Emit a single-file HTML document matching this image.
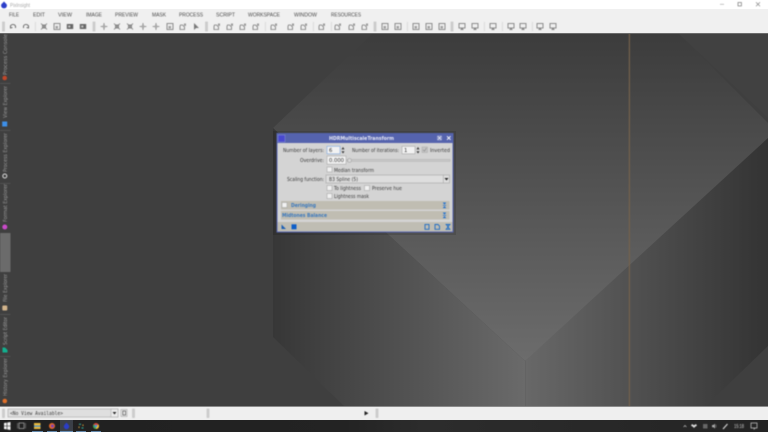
<!DOCTYPE html>
<html lang="en"><head><meta charset="utf-8"><title>PixInsight</title>
<style>
html,body{margin:0;padding:0;width:768px;height:432px;overflow:hidden;background:#3f3f3f}
svg{display:block;position:absolute;left:0;top:0}
text{font-family:"DejaVu Sans","Liberation Sans",sans-serif;font-size:5.3px;fill:#3a3a3a}
.m{font-size:5.4px;fill:#4a4a4a;font-family:"Liberation Sans",sans-serif}
.t{font-size:5.4px;fill:#9a9a9a}
.b{font-weight:bold;fill:#3a78bd;font-size:5.3px}
.i{fill:none;stroke:#7c7c7c;stroke-width:.85}
.h{fill:#cfcfcf;stroke:#bbb;stroke-width:.5}
.c{fill:#f2f2f2;stroke:#a8a8a8;stroke-width:.6}
.soft{filter:blur(.45px)}
</style></head><body>
<svg width="768" height="432" viewBox="0 0 768 432" xmlns="http://www.w3.org/2000/svg">
<defs>
<linearGradient id="gc" gradientUnits="userSpaceOnUse" x1="0" y1="33" x2="0" y2="361"><stop offset="0" stop-color="#3c3c3c"/><stop offset="1" stop-color="#6c6c6c"/></linearGradient>
<linearGradient id="gl" gradientUnits="userSpaceOnUse" x1="273" y1="0" x2="525" y2="0"><stop offset="0" stop-color="#373737"/><stop offset="1" stop-color="#6a6a6a"/></linearGradient>
<linearGradient id="gr" gradientUnits="userSpaceOnUse" x1="525" y1="0" x2="768" y2="0"><stop offset="0" stop-color="#686868"/><stop offset="1" stop-color="#333"/></linearGradient>
<linearGradient id="gt" x1="0" y1="0" x2="1" y2="0"><stop offset="0" stop-color="#202020"/><stop offset=".45" stop-color="#232323"/><stop offset=".55" stop-color="#2c2c2c"/><stop offset="1" stop-color="#242424"/></linearGradient>
<symbol id="pg" viewBox="0 0 8 8"><rect class="i" x="1" y="1" width="6" height="6"/><rect x="2.5" y="3.5" width="2.5" height="2.5" fill="#a0a0a0"/></symbol>
<symbol id="pf" viewBox="0 0 8 8"><rect x=".8" y="1.5" width="6.4" height="5" fill="#666"/><rect x="2.3" y="3" width="2" height="2" fill="#ccc"/></symbol>
<symbol id="px" viewBox="0 0 8 8"><path class="i" d="M4 .6V7.4M.6 4H7.4"/><rect x="2.7" y="2.7" width="2.6" height="2.6" fill="#aaa"/></symbol>
<symbol id="pz" viewBox="0 0 8 8"><path class="i" d="M1 1L7 7M7 1L1 7"/><rect class="i" x="2.5" y="2.5" width="3" height="3"/></symbol>
<symbol id="ps" viewBox="0 0 8 8"><path class="i" d="M1 4V7H5.5V4.5L3.5 2.5H1.5Z"/><rect x="5" y="1" width="2" height="2.4" fill="#999"/></symbol>
<symbol id="pm" viewBox="0 0 8 8"><rect class="i" x="1" y="1" width="6" height="4.5"/><path d="M2.5 7H5.5" stroke="#7c7c7c" stroke-width=".9"/><rect x="3" y="5" width="2" height="1.6" fill="#888"/></symbol>
<symbol id="spin" viewBox="0 0 4 8"><path d="M2 .5L3.6 3H.4ZM2 7.5L.4 5H3.6Z" fill="#333"/></symbol>
<symbol id="coll" viewBox="0 0 6 8"><path d="M.8 .6H5.2L3 3.2ZM.8 7.4H5.2L3 4.8Z" fill="#1e6fd0"/><rect x="1" y="3.6" width="4" height=".8" fill="#1e6fd0"/></symbol>
</defs>

<!-- workspace background -->
<rect x="0" y="33" width="768" height="374" fill="#3f3f3f"/>
<polygon points="678,33 768,33 768,118" fill="#414141"/>
<polygon points="373,33 678,33 790,145 525,361 273,128" fill="url(#gc)"/>
<polygon points="273,128 525,361 525,407 345,407 273,337" fill="url(#gl)"/>
<polygon points="525,361 768,138 768,346 705,407 525,407" fill="url(#gr)"/>
<path d="M525.5 361V407" stroke="#5f5f5f" stroke-width=".5"/>
<rect x="628.8" y="33" width="1.2" height="374" fill="#75624c" class="soft"/>
<rect x="0" y="33" width="768" height="1" fill="#6a6a6a"/>

<!-- title bar -->
<rect width="768" height="9" fill="#fff"/>
<rect y="9" width="768" height="24" fill="#f0f0f0"/>
<g class="soft">
<path d="M4 1.5L6.6 4.2A2.9 2.9 0 1 1 1.4 4.2Z" fill="#2b3ec9"/>
<text x="10" y="6.8" style="font-size:5px;fill:#a8a8a8;font-family:'Liberation Sans',sans-serif" textLength="20" lengthAdjust="spacingAndGlyphs">PixInsight</text>
<path d="M720 4.3H724" stroke="#aaa" stroke-width=".7"/>
<rect x="738" y="2.5" width="3.4" height="3.4" fill="none" stroke="#777" stroke-width=".7"/>
<path d="M756 2.2L760 6.2M760 2.2L756 6.2" stroke="#888" stroke-width=".7"/>

<!-- menu -->
<text class="m" x="9" y="16.6" textLength="10" lengthAdjust="spacingAndGlyphs">FILE</text>
<text class="m" x="33" y="16.6" textLength="12" lengthAdjust="spacingAndGlyphs">EDIT</text>
<text class="m" x="58" y="16.6" textLength="14" lengthAdjust="spacingAndGlyphs">VIEW</text>
<text class="m" x="86" y="16.6" textLength="16" lengthAdjust="spacingAndGlyphs">IMAGE</text>
<text class="m" x="115" y="16.6" textLength="23" lengthAdjust="spacingAndGlyphs">PREVIEW</text>
<text class="m" x="152" y="16.6" textLength="14" lengthAdjust="spacingAndGlyphs">MASK</text>
<text class="m" x="179" y="16.6" textLength="24" lengthAdjust="spacingAndGlyphs">PROCESS</text>
<text class="m" x="216" y="16.6" textLength="19" lengthAdjust="spacingAndGlyphs">SCRIPT</text>
<text class="m" x="248" y="16.6" textLength="32" lengthAdjust="spacingAndGlyphs">WORKSPACE</text>
<text class="m" x="294" y="16.6" textLength="23" lengthAdjust="spacingAndGlyphs">WINDOW</text>
<text class="m" x="331" y="16.6" textLength="30" lengthAdjust="spacingAndGlyphs">RESOURCES</text>

<!-- toolbar handles / separators -->
<g class="h">
<rect x="2.5" y="22" width="2" height="9"/><rect x="93" y="22" width="2" height="9"/><rect x="205.5" y="22" width="2" height="9"/><rect x="374" y="22" width="2" height="9"/><rect x="451" y="22" width="2" height="9"/>
</g>
<g fill="#d4d4d4">
<rect x="35" y="22" width=".8" height="9"/><rect x="265" y="22" width=".8" height="9"/><rect x="313" y="22" width=".8" height="9"/><rect x="331" y="22" width=".8" height="9"/><rect x="407" y="22" width=".8" height="9"/><rect x="484" y="22" width=".8" height="9"/><rect x="502" y="22" width=".8" height="9"/><rect x="532" y="22" width=".8" height="9"/>
</g>
<!-- toolbar icons -->
<path class="i" d="M10.5 28V26.5A2.5 2 0 0 1 15.5 26.5V28M10.5 25.5L10.5 28L12.5 27.5" style="stroke:#555"/>
<path class="i" d="M28.5 28V26.5A2.5 2 0 0 0 23.5 26.5V28M28.5 25.5L28.5 28L26.5 27.5" style="stroke:#555"/>
<use href="#pz" x="40" y="22.5" width="8" height="8"/>
<use href="#pg" x="53" y="22.5" width="8" height="8"/>
<use href="#pf" x="66" y="22.5" width="8" height="8"/>
<use href="#pf" x="79" y="22.5" width="8" height="8"/>
<use href="#px" x="100" y="22.5" width="8" height="8"/>
<use href="#pz" x="113" y="22.5" width="8" height="8"/>
<use href="#pz" x="126" y="22.5" width="8" height="8"/>
<use href="#px" x="139" y="22.5" width="8" height="8"/>
<use href="#px" x="152" y="22.5" width="8" height="8"/>
<use href="#pg" x="166" y="22.5" width="8" height="8"/>
<use href="#ps" x="179" y="22.5" width="8" height="8"/>
<path d="M194 23L194 30L196 28L199 28Z" fill="#777"/>
<use href="#ps" x="213" y="22.5" width="8" height="8"/>
<use href="#ps" x="226" y="22.5" width="8" height="8"/>
<use href="#ps" x="239" y="22.5" width="8" height="8"/>
<use href="#ps" x="252" y="22.5" width="8" height="8"/>
<use href="#ps" x="270" y="22.5" width="8" height="8"/>
<use href="#ps" x="287" y="22.5" width="8" height="8"/>
<use href="#ps" x="300" y="22.5" width="8" height="8"/>
<use href="#ps" x="318" y="22.5" width="8" height="8"/>
<use href="#ps" x="334" y="22.5" width="8" height="8"/>
<use href="#ps" x="348" y="22.5" width="8" height="8"/>
<use href="#ps" x="361" y="22.5" width="8" height="8"/>
<use href="#pg" x="381" y="22.5" width="8" height="8"/>
<use href="#pg" x="394" y="22.5" width="8" height="8"/>
<use href="#pg" x="412" y="22.5" width="8" height="8"/>
<use href="#pg" x="425" y="22.5" width="8" height="8"/>
<use href="#pg" x="438" y="22.5" width="8" height="8"/>
<use href="#pm" x="458" y="22.5" width="8" height="8"/>
<use href="#pm" x="471" y="22.5" width="8" height="8"/>
<use href="#pm" x="489" y="22.5" width="8" height="8"/>
<use href="#pm" x="507" y="22.5" width="8" height="8"/>
<use href="#pm" x="519" y="22.5" width="8" height="8"/>
<use href="#pm" x="536" y="22.5" width="8" height="8"/>
<use href="#pm" x="549" y="22.5" width="8" height="8"/>

<!-- side tabs -->
<rect x="0" y="233" width="10.5" height="39" fill="#6b6b6b"/>
<g fill="#565656">
<rect x="0" y="83" width="10.5" height=".8"/><rect x="0" y="130" width="10.5" height=".8"/><rect x="0" y="183" width="10.5" height=".8"/><rect x="0" y="314" width="10.5" height=".8"/><rect x="0" y="356" width="10.5" height=".8"/>
</g>
<text class="t" transform="rotate(-90 6.8 75)" x="6.8" y="75" textLength="41" lengthAdjust="spacingAndGlyphs">Process Console</text>
<text class="t" transform="rotate(-90 6.8 118)" x="6.8" y="118" textLength="32" lengthAdjust="spacingAndGlyphs">View Explorer</text>
<text class="t" transform="rotate(-90 6.8 172)" x="6.8" y="172" textLength="39" lengthAdjust="spacingAndGlyphs">Process Explorer</text>
<text class="t" transform="rotate(-90 6.8 222)" x="6.8" y="222" textLength="38" lengthAdjust="spacingAndGlyphs">Format Explorer</text>
<text class="t" transform="rotate(-90 6.8 302)" x="6.8" y="302" textLength="28" lengthAdjust="spacingAndGlyphs">File Explorer</text>
<text class="t" transform="rotate(-90 6.8 345)" x="6.8" y="345" textLength="28" lengthAdjust="spacingAndGlyphs">Script Editor</text>
<text class="t" transform="rotate(-90 6.8 396)" x="6.8" y="396" textLength="38" lengthAdjust="spacingAndGlyphs">History Explorer</text>
<circle cx="4.7" cy="78" r="2.3" fill="#c0472a"/>
<rect x="2.2" y="121.5" width="5" height="5" fill="#3d8fe8"/>
<circle cx="4.8" cy="176" r="2" fill="none" stroke="#ddd" stroke-width="1"/>
<circle cx="4.8" cy="227" r="2.5" fill="#c94ac9"/>
<rect x="2.3" y="305.5" width="5" height="5" rx="1" fill="#d2b48c"/>
<path d="M2.5 347.5H5L7.5 350V352.5H2.5Z" fill="#12b08f"/>
<circle cx="4.8" cy="401" r="2.3" fill="#e0702a"/>
</g>

<!-- dialog -->
<rect x="273" y="131" width="183" height="104" fill="#000" opacity=".12"/>
<g class="soft">
<rect x="276.5" y="133" width="177" height="99.5" fill="#5563ad"/>
<rect x="277.5" y="143" width="175" height="88.5" fill="#d4d4d4"/>
<rect x="277.5" y="222" width="175" height="9.5" fill="#bfbdb3"/>
<rect x="281" y="201" width="168.5" height="8.5" fill="#c0bdb2"/>
<rect x="281" y="211" width="168.5" height="8.5" fill="#c0bdb2"/>
<rect x="278" y="135" width="7" height="7" fill="#4848cf" stroke="#8b93d6" stroke-width=".5"/>
<text x="329" y="140.2" textLength="65" lengthAdjust="spacingAndGlyphs" style="font-weight:bold;fill:#e6e8f5">HDRMultiscaleTransform</text>
<path d="M438 136.5L441 139.5M441 136.5L438 139.5" stroke="#fff" stroke-width=".8"/>
<rect x="437.5" y="136" width="4" height="4" fill="none" stroke="#dfe2f2" stroke-width=".4"/>
<path d="M447 136.2L450.6 139.8M450.6 136.2L447 139.8" stroke="#fff" stroke-width=".9"/>

<text x="283" y="151.8" textLength="41" lengthAdjust="spacingAndGlyphs">Number of layers:</text>
<rect class="c" x="327" y="146.3" width="13" height="7.5" style="stroke:#7ea9e0"/>
<text x="329" y="151.8">6</text>
<use href="#spin" x="341" y="146.5" width="4" height="7.5"/>
<text x="352" y="151.8" textLength="47" lengthAdjust="spacingAndGlyphs">Number of iterations:</text>
<rect class="c" x="402" y="146.3" width="13" height="7.5"/>
<text x="404" y="151.8">1</text>
<use href="#spin" x="416" y="146.5" width="4" height="7.5"/>
<rect x="422" y="147" width="5.5" height="5.5" fill="#c4c4c4" stroke="#aaa" stroke-width=".5"/>
<path d="M423 149.7L424.4 151.2L426.5 148" fill="none" stroke="#888" stroke-width=".6"/>
<text x="430" y="151.8" textLength="20" lengthAdjust="spacingAndGlyphs">Inverted</text>

<text x="300" y="162" textLength="24" lengthAdjust="spacingAndGlyphs">Overdrive:</text>
<rect class="c" x="327" y="156" width="19" height="8.2"/>
<text x="329" y="162" textLength="15" lengthAdjust="spacingAndGlyphs">0.000</text>
<rect x="347" y="159.4" width="103" height="2" fill="#c8c8c8" stroke="#aaa" stroke-width=".4"/>
<circle cx="349.5" cy="160.4" r="2" fill="#d8d8d8" stroke="#999" stroke-width=".5"/>

<rect class="c" x="327" y="167" width="5" height="5"/>
<text x="334" y="171.8" textLength="40" lengthAdjust="spacingAndGlyphs">Median transform</text>

<text x="287" y="180.8" textLength="37" lengthAdjust="spacingAndGlyphs">Scaling function:</text>
<rect x="326" y="175" width="123.5" height="8" fill="#dedede" stroke="#a5a5a5" stroke-width=".6"/>
<text x="329" y="180.8" textLength="29" lengthAdjust="spacingAndGlyphs">B3 Spline (5)</text>
<rect x="443" y="175" width=".6" height="8" fill="#a5a5a5"/>
<path d="M444.5 178H448.5L446.5 180.5Z" fill="#222"/>

<rect class="c" x="327" y="185.5" width="5" height="5"/>
<text x="334" y="190" textLength="27" lengthAdjust="spacingAndGlyphs">To lightness</text>
<rect class="c" x="364.5" y="185.5" width="5" height="5"/>
<text x="372" y="190" textLength="30" lengthAdjust="spacingAndGlyphs">Preserve hue</text>
<rect class="c" x="327" y="193.5" width="5" height="5"/>
<text x="334" y="198" textLength="35" lengthAdjust="spacingAndGlyphs">Lightness mask</text>

<rect class="c" x="282" y="202.5" width="5" height="5"/>
<text class="b" x="291" y="207" textLength="25" lengthAdjust="spacingAndGlyphs">Deringing</text>
<use href="#coll" x="442" y="202" width="5" height="6.6"/>
<text class="b" x="282" y="217" textLength="45" lengthAdjust="spacingAndGlyphs">Midtones Balance</text>
<use href="#coll" x="442" y="212" width="5" height="6.6"/>

<path d="M281.5 224.5V229H286Z" fill="#1d5fb4"/>
<rect x="291.5" y="224.3" width="5" height="5" fill="#0d5ec8"/>
<rect x="425" y="224.5" width="4" height="4.8" fill="none" stroke="#1d6bc4" stroke-width=".9"/>
<path d="M435 224.5H438L439.5 226V229.3H435Z" fill="none" stroke="#1d6bc4" stroke-width=".9"/>
<path d="M445.5 224.5H450.5M445.5 229.3H450.5M446.5 224.5L449.5 229.3M449.5 224.5L446.5 229.3" fill="none" stroke="#1d6bc4" stroke-width=".9"/>
</g>

<!-- bottom bar -->
<rect y="407" width="768" height="13" fill="#efefef"/>
<rect y="406" width="768" height="1" fill="#8a8a8a"/>
<g class="soft">
<g class="h"><rect x="2.5" y="409" width="2" height="8.5"/><rect x="132.5" y="409" width="2" height="8.5"/><rect x="207" y="409" width="2" height="8.5"/><rect x="376" y="409" width="2" height="8.5"/></g>
<rect x="8" y="409" width="110" height="8" fill="#dfdfdf" stroke="#a5a5a5" stroke-width=".6"/>
<text x="10" y="414.8" style="font-family:'DejaVu Sans Mono','Liberation Mono',monospace;font-size:4.8px" textLength="53" lengthAdjust="spacingAndGlyphs">&lt;No View Available&gt;</text>
<rect x="111" y="409" width="7" height="8" fill="#ececec" stroke="#a5a5a5" stroke-width=".5"/>
<path d="M112.6 412H116.4L114.5 414.5Z" fill="#222"/>
<rect x="121" y="409.5" width="6" height="7" fill="#e8e8e8" stroke="#999" stroke-width=".5"/>
<rect x="122.8" y="411" width="2.8" height="4" fill="none" stroke="#444" stroke-width=".6"/>
<path d="M364.5 411L368.5 413.3L364.5 415.5Z" fill="#222"/>
</g>

<!-- taskbar -->
<rect y="420" width="768" height="12" fill="url(#gt)"/>
<rect x="60" y="420" width="13" height="12" fill="#3a3f47"/>
<rect x="60" y="431.3" width="13" height=".7" fill="#7fb3e6"/>
<rect x="32" y="431.3" width="11" height=".7" fill="#7fb3e6"/>
<rect x="47" y="431.3" width="10" height=".7" fill="#7fb3e6"/>
<rect x="76" y="431.3" width="10" height=".7" fill="#7fb3e6"/>
<rect x="91" y="431.3" width="10" height=".7" fill="#7fb3e6"/>
<g class="soft">
<path d="M4 423L6.7 422.6V425.7H4ZM7.3 422.5L10.5 422V425.7H7.3ZM4 426.3H6.7V429.4L4 429ZM7.3 426.3H10.5V430L7.3 429.5Z" fill="#f4f4f4"/>
<rect x="19" y="423" width="5" height="5.5" fill="none" stroke="#aaa" stroke-width=".7"/>
<path d="M17.5 423V428.5M25.5 423V428.5" stroke="#888" stroke-width=".6"/>
<rect x="34" y="423" width="6.5" height="6" fill="#e8b93d"/><rect x="34" y="425.5" width="6.5" height="1.2" fill="#3d8fd8"/>
<circle cx="52" cy="426" r="3" fill="#e8692a"/><circle cx="52.4" cy="426" r="1.5" fill="#7a3fb8"/>
<path d="M66.5 422.5L68.6 425A2.6 2.6 0 1 1 64.4 425Z" fill="#2b3ec9"/>
<circle cx="81" cy="426" r="2.8" fill="#222"/><path d="M79 424.2H81M81.5 428H83.5" stroke="#2fb6a5" stroke-width="1"/><path d="M83 424.5V426M79 426.5V428" stroke="#d9a13a" stroke-width="1"/>
<circle cx="96" cy="426" r="3" fill="#d9473a"/><path d="M96 426L96 429A3 3 0 0 1 93.4 424.5Z" fill="#3aa757"/><path d="M96 426L98.6 424.5A3 3 0 0 1 96 429Z" fill="#f2c12e"/><circle cx="96" cy="426" r="1.3" fill="#4a8ee8"/>
<path d="M683.6 427L685 425.4L686.4 427" fill="none" stroke="#ccc" stroke-width=".6"/>
<path d="M692 424L694 425.3L696 424L697 425.6L695.2 426.8L694 428L692.8 426.8L691 425.6Z" fill="#ddd"/>
<rect x="703" y="424" width="4.5" height="4.5" fill="#666"/>
<path d="M712 425H713.5L715 423.6V428.6L713.5 427.2H712Z" fill="#aaa"/><path d="M716 424.6V427.6" stroke="#999" stroke-width=".5"/>
<path d="M723 429L727.5 424" stroke="#ccc" stroke-width="1.3"/>
<text x="734" y="428" textLength="10" lengthAdjust="spacingAndGlyphs" style="fill:#ccc;font-size:5px;font-family:'Liberation Sans',sans-serif">15:18</text>
<rect x="751" y="423" width="6" height="5" fill="none" stroke="#ccc" stroke-width=".7"/><path d="M754 428V429.6L755.6 428" fill="none" stroke="#ccc" stroke-width=".5"/>
</g>
</svg>
</body></html>
